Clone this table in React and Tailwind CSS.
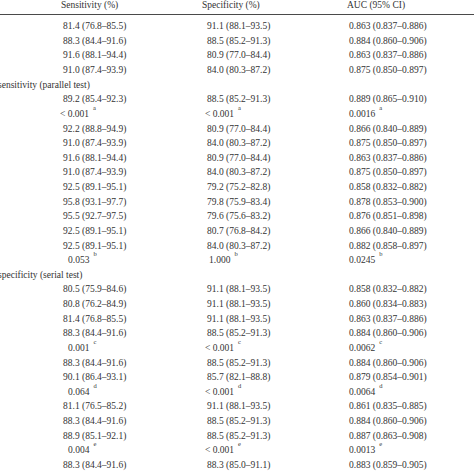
import React from "react";

// rows: [sensitivity, specificity, auc] or a section label
const rows = [
  ["81.4 (76.8–85.5)", "91.1 (88.1–93.5)", "0.863 (0.837–0.886)"],
  ["88.3 (84.4–91.6)", "88.5 (85.2–91.3)", "0.884 (0.860–0.906)"],
  ["91.6 (88.1–94.4)", "80.9 (77.0–84.4)", "0.863 (0.837–0.886)"],
  ["91.0 (87.4–93.9)", "84.0 (80.3–87.2)", "0.875 (0.850–0.897)"],
  { label: "sensitivity (parallel test)" },
  ["89.2 (85.4–92.3)", "88.5 (85.2–91.3)", "0.889 (0.865–0.910)"],
  [["< 0.001", "a", -3], ["< 0.001", "a", -2], ["0.0016", "a"]],
  ["92.2 (88.8–94.9)", "80.9 (77.0–84.4)", "0.866 (0.840–0.889)"],
  ["91.0 (87.4–93.9)", "84.0 (80.3–87.2)", "0.875 (0.850–0.897)"],
  ["91.6 (88.1–94.4)", "80.9 (77.0–84.4)", "0.863 (0.837–0.886)"],
  ["91.0 (87.4–93.9)", "84.0 (80.3–87.2)", "0.875 (0.850–0.897)"],
  ["92.5 (89.1–95.1)", "79.2 (75.2–82.8)", "0.858 (0.832–0.882)"],
  ["95.8 (93.1–97.7)", "79.8 (75.9–83.4)", "0.878 (0.853–0.900)"],
  ["95.5 (92.7–97.5)", "79.6 (75.6–83.2)", "0.876 (0.851–0.898)"],
  ["92.5 (89.1–95.1)", "80.7 (76.8–84.2)", "0.866 (0.840–0.889)"],
  ["92.5 (89.1–95.1)", "84.0 (80.3–87.2)", "0.882 (0.858–0.897)"],
  [["0.053", "b", 5], ["1.000", "b", 2], ["0.0245", "b"]],
  { label: "specificity (serial test)" },
  ["80.5 (75.9–84.6)", "91.1 (88.1–93.5)", "0.858 (0.832–0.882)"],
  ["80.8 (76.2–84.9)", "91.1 (88.1–93.5)", "0.860 (0.834–0.883)"],
  ["81.4 (76.8–85.5)", "91.1 (88.1–93.5)", "0.863 (0.837–0.886)"],
  ["88.3 (84.4–91.6)", "88.5 (85.2–91.3)", "0.884 (0.860–0.906)"],
  [["0.001", "c", 5], ["< 0.001", "c", -2], ["0.0062", "c"]],
  ["88.3 (84.4–91.6)", "88.5 (85.2–91.3)", "0.884 (0.860–0.906)"],
  ["90.1 (86.4–93.1)", "85.7 (82.1–88.8)", "0.879 (0.854–0.901)"],
  [["0.064", "d", 5], ["< 0.001", "d", -2], ["0.0064", "d"]],
  ["81.1 (76.5–85.2)", "91.1 (88.1–93.5)", "0.861 (0.835–0.885)"],
  ["88.3 (84.4–91.6)", "88.5 (85.2–91.3)", "0.884 (0.860–0.906)"],
  ["88.9 (85.1–92.1)", "88.5 (85.2–91.3)", "0.887 (0.863–0.908)"],
  [["0.004", "e", 5], ["< 0.001", "e", -2], ["0.0013", "e"]],
  ["88.3 (84.4–91.6)", "88.3 (85.0–91.1)", "0.883 (0.859–0.905)"],
];

function Cell({ value }) {
  if (typeof value === "string") return <div className="whitespace-nowrap">{value}</div>;
  const [text, sup, shift = 0] = value;
  return (
    <div className="whitespace-nowrap" style={{ marginLeft: shift }}>
      {text}
      <sup className="ml-[4px] text-[6.5px] align-[4px]">{sup}</sup>
    </div>
  );
}

export default function App() {
  return (
    <div className="w-[474px] h-[474px] overflow-hidden bg-white text-[#333] text-[9.5px] leading-[14.63px] font-['Liberation_Serif',serif]">
      <div className="grid grid-cols-[61px_141px_145px_1fr] -mt-[2px]">
        <div />
        <div>Sensitivity (%)</div>
        <div>Specificity (%)</div>
        <div>AUC (95% CI)</div>
      </div>
      <div className="mt-[1px] h-[1.5px] bg-[#4a4a4a]" />
      <div className="mt-[4px]">
        {rows.map((row, i) =>
          row.label ? (
            <div key={i} className="-ml-[2px] whitespace-nowrap">{row.label}</div>
          ) : (
            <div key={i} className="grid grid-cols-[63px_144px_142px_1fr]">
              <div />
              <Cell value={row[0]} />
              <Cell value={row[1]} />
              <Cell value={row[2]} />
            </div>
          )
        )}
      </div>
    </div>
  );
}
